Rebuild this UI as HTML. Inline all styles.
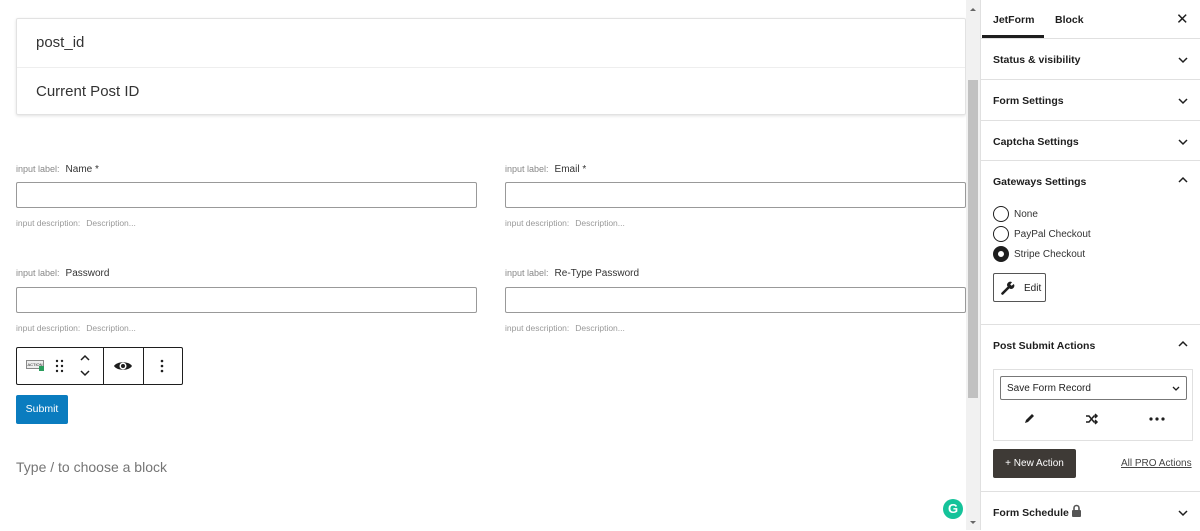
<!DOCTYPE html>
<html><head><style>
*{box-sizing:border-box;margin:0;padding:0}
body{width:1200px;height:530px;overflow:hidden;background:#fff;font-family:"Liberation Sans",sans-serif;color:#1e1e1e;position:relative}
.a{position:absolute}
.card{left:16px;top:18px;width:950px;height:97px;border:1px solid #e2e2e2;box-shadow:0 1px 3px rgba(0,0,0,.12);border-radius:2px}
.card div{height:48px;line-height:48px;padding-left:19px;font-size:15px;color:#333}
.card div+div{border-top:1px solid #eee}
.lbl{font-size:9px;color:#888}
.lbl b{font-weight:normal;font-size:10px;color:#333;margin-left:6px}
.ds{font-size:8.5px;color:#999}
.ds span{margin-left:6px}
.inp{width:461px;height:26px;border:1px solid #999;border-radius:2px}
.side{left:980px;top:0;width:220px;height:530px;border-left:1px solid #e0e0e0}
.sec{position:absolute;left:0;width:220px;border-top:1px solid #e0e0e0;font-size:10.5px;font-weight:bold;color:#1e1e1e}
.sec .t{position:absolute;left:12px}
.chev{position:absolute;right:12px;width:12px;height:8px}
.chev path{stroke:#1e1e1e;stroke-width:1.5;fill:none}
.rad{position:absolute;left:12px;width:16px;height:16px;border:1px solid #1e1e1e;border-radius:50%}
.rt{position:absolute;left:33px;font-size:10px;color:#333;font-weight:normal}
</style></head><body>
<div class="a card"><div>post_id</div><div>Current Post ID</div></div>

<div class="a lbl" style="left:16px;top:164px">input label:<b>Name *</b></div>
<div class="a inp" style="left:16px;top:182px"></div>
<div class="a ds" style="left:16px;top:218px">input description:<span>Description...</span></div>
<div class="a lbl" style="left:505px;top:164px">input label:<b>Email *</b></div>
<div class="a inp" style="left:505px;top:182px"></div>
<div class="a ds" style="left:505px;top:218px">input description:<span>Description...</span></div>

<div class="a lbl" style="left:16px;top:268px">input label:<b>Password</b></div>
<div class="a inp" style="left:16px;top:287px"></div>
<div class="a ds" style="left:16px;top:323px">input description:<span>Description...</span></div>
<div class="a lbl" style="left:505px;top:268px">input label:<b>Re-Type Password</b></div>
<div class="a inp" style="left:505px;top:287px"></div>
<div class="a ds" style="left:505px;top:323px">input description:<span>Description...</span></div>

<div class="a" style="left:16px;top:347px;width:167px;height:38px;border:1px solid #1e1e1e;border-radius:2px">
 <div class="a" style="left:86px;top:0;width:1px;height:36px;background:#1e1e1e"></div>
 <div class="a" style="left:126px;top:0;width:1px;height:36px;background:#1e1e1e"></div>
 <div class="a" style="left:9px;top:12px;width:18px;height:9px;border:1px solid #888;background:#eee;font-size:4px;line-height:7px;text-align:center">ACTION</div>
 <div class="a" style="left:22px;top:18px;width:5px;height:5px;background:#2a9d5c"></div>
 <svg class="a" style="left:38px;top:11px" width="10" height="14"><g fill="#1e1e1e"><circle cx="2" cy="2" r="1.2"/><circle cx="7" cy="2" r="1.2"/><circle cx="2" cy="7" r="1.2"/><circle cx="7" cy="7" r="1.2"/><circle cx="2" cy="12" r="1.2"/><circle cx="7" cy="12" r="1.2"/></g></svg>
 <svg class="a" style="left:61px;top:6px" width="14" height="24"><path d="M3 6l4-4 4 4M3 17l4 4 4-4" stroke="#1e1e1e" stroke-width="1.5" fill="none"/></svg>
 <svg class="a" style="left:96px;top:11px" width="20" height="14"><path d="M1 7C4 2 16 2 19 7C16 12 4 12 1 7Z" fill="#1e1e1e"/><circle cx="10" cy="7" r="3.5" fill="#fff"/><circle cx="10" cy="7" r="2" fill="#1e1e1e"/></svg>
 <svg class="a" style="left:143px;top:11px" width="4" height="14"><g fill="#1e1e1e"><circle cx="2" cy="2" r="1.3"/><circle cx="2" cy="7" r="1.3"/><circle cx="2" cy="12" r="1.3"/></g></svg>
</div>
<div class="a" style="left:16px;top:395px;width:52px;height:29px;background:#0a7cbf;border-radius:2px;color:#fff;font-size:10.5px;line-height:29px;text-align:center">Submit</div>
<div class="a" style="left:16px;top:459px;font-size:14px;color:#757575">Type / to choose a block</div>
<div class="a" style="left:943px;top:499px;width:20px;height:20px;border-radius:50%;background:#15c39a;color:#fff;font-size:13px;font-weight:bold;text-align:center;line-height:20px">G</div>

<div class="a" style="left:966px;top:0;width:14px;height:530px;background:#f1f1f1"></div>
<div class="a" style="left:968px;top:80px;width:10px;height:318px;background:#c1c1c1"></div>
<div class="a" style="left:970px;top:5px;width:0;height:0;border:3px solid transparent;border-bottom-color:#666"></div>
<div class="a" style="left:970px;top:521px;width:0;height:0;border:3px solid transparent;border-top-color:#666"></div>

<div class="a side">
 <div class="a" style="left:12px;top:14px;font-size:10.5px;font-weight:bold">JetForm</div>
 <div class="a" style="left:74px;top:14px;font-size:10.5px;font-weight:bold">Block</div>
 <div class="a" style="left:1px;top:35px;width:62px;height:3px;background:#1e1e1e"></div>
 <div class="a" style="left:195px;top:10px;font-size:15px">✕</div>
 <div class="sec" style="top:38px;height:41px"><span class="t" style="top:15px">Status &amp; visibility</span><svg class="chev" style="top:17px" viewBox="0 0 12 8"><path d="M2 2l4 4 4-4"/></svg></div>
 <div class="sec" style="top:79px;height:41px"><span class="t" style="top:15px">Form Settings</span><svg class="chev" style="top:17px" viewBox="0 0 12 8"><path d="M2 2l4 4 4-4"/></svg></div>
 <div class="sec" style="top:120px;height:41px"><span class="t" style="top:15px">Captcha Settings</span><svg class="chev" style="top:17px" viewBox="0 0 12 8"><path d="M2 2l4 4 4-4"/></svg></div>
 <div class="sec" style="top:160px;height:164px"><span class="t" style="top:15px">Gateways Settings</span><svg class="chev" style="top:15px" viewBox="0 0 12 8"><path d="M2 6l4-4 4 4"/></svg>
  <div class="rad" style="top:45px"></div><span class="rt" style="top:48px">None</span>
  <div class="rad" style="top:65px"></div><span class="rt" style="top:68px">PayPal Checkout</span>
  <div class="rad" style="top:85px;border:5px solid #1e1e1e"></div><span class="rt" style="top:88px">Stripe Checkout</span>
  <div class="a" style="left:12px;top:112px;width:53px;height:29px;border:1px solid #555;border-radius:2px">
   <svg class="a" style="left:7px;top:7px" width="14" height="14" viewBox="0 0 14 14"><path d="M1.5 12.5L7 7" stroke="#1e1e1e" stroke-width="2.6" stroke-linecap="round"/><path d="M6.5 5.5A3.2 3.2 0 0 1 11 1.2L9.2 3.4 10.6 4.8 12.8 3A3.2 3.2 0 0 1 8.5 7.5Z" fill="#1e1e1e"/></svg>
   <span class="a" style="left:30px;top:9px;font-size:10px;font-weight:normal">Edit</span></div>
 </div>
 <div class="sec" style="top:324px;height:167px"><span class="t" style="top:15px">Post Submit Actions</span><svg class="chev" style="top:15px" viewBox="0 0 12 8"><path d="M2 6l4-4 4 4"/></svg>
  <div class="a" style="left:12px;top:44px;width:200px;height:72px;border:1px solid #e0e0e0"></div>
  <div class="a" style="left:19px;top:51px;width:187px;height:24px;border:1px solid #777;border-radius:2px;font-weight:normal;font-size:10px;padding:6px 0 0 6px">Save Form Record<svg class="a" style="right:6px;top:9px" width="8" height="6"><path d="M1 1l3 3 3-3" stroke="#1e1e1e" stroke-width="1.3" fill="none"/></svg></div>
  <svg class="a" style="left:42px;top:88px" width="12" height="12"><path d="M2 10l1-3 6-6 2 2-6 6z" fill="#1e1e1e"/></svg>
  <svg class="a" style="left:104px;top:88px" width="14" height="12"><path d="M1 3h3l5 6h3M1 9h3l5-6h3M10 1l2 2-2 2M10 7l2 2-2 2" stroke="#1e1e1e" stroke-width="1.5" fill="none"/></svg>
  <svg class="a" style="left:168px;top:92px" width="16" height="4"><g fill="#1e1e1e"><circle cx="2" cy="2" r="1.6"/><circle cx="8" cy="2" r="1.6"/><circle cx="14" cy="2" r="1.6"/></g></svg>
  <div class="a" style="left:12px;top:124px;width:83px;height:29px;background:#3e3a36;border-radius:2px;color:#fff;font-weight:normal;font-size:10px;line-height:29px;text-align:center">+ New Action</div>
  <div class="a" style="left:140px;top:133px;font-weight:normal;font-size:10px;color:#444;text-decoration:underline">All PRO Actions</div>
 </div>
 <div class="sec" style="top:491px;height:40px"><span class="t" style="top:15px">Form Schedule</span>
  <svg class="a" style="left:90px;top:12px" width="11" height="13" viewBox="0 0 11 13"><path d="M3 6V4a2.5 2.5 0 0 1 5 0v2" stroke="#555" stroke-width="1.6" fill="none"/><rect x="1" y="6" width="9" height="7" rx="1" fill="#555"/></svg>
  <svg class="chev" style="top:17px" viewBox="0 0 12 8"><path d="M2 2l4 4 4-4"/></svg></div>
</div>
</body></html>
